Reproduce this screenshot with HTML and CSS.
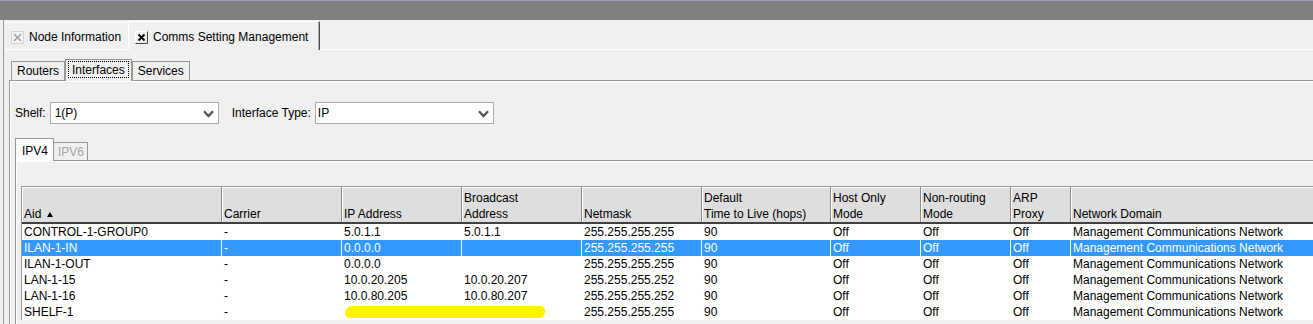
FILE: index.html
```html
<!DOCTYPE html>
<html lang="en">
<head>
<meta charset="utf-8">
<title>Comms Setting Management</title>
<link rel="stylesheet" href="styles.css">
</head>
<body>
<div class="titlebar"></div>
<div class="window">
  <div class="doc-tabs">
    <div class="doc-tab doc-tab--inactive">
      <svg class="close-icon" width="13" height="13" viewBox="0 0 13 13">
        <rect x="0.5" y="0.5" width="12" height="12" fill="#f4f4f4" stroke="#d4d4d4"/>
        <path d="M3 3 L10 10 M10 3 L3 10" stroke="#9a9a9a" stroke-width="1.4" fill="none"/>
      </svg>
      <span>Node Information</span>
    </div>
    <div class="doc-tab doc-tab--active">
      <svg class="close-icon" width="13" height="13" viewBox="0 0 13 13">
        <rect x="0" y="0" width="13" height="13" fill="#f0f0f0"/>
        <path d="M0.5 12.5 V0.5 H12.5" stroke="#ffffff" fill="none"/>
        <path d="M0.5 12.5 H12.5 V0.5" stroke="#404040" fill="none"/>
        <path d="M3.5 3.5 L9.5 9.5 M9.5 3.5 L3.5 9.5" stroke="#000" stroke-width="1.8" fill="none"/>
      </svg>
      <span>Comms Setting Management</span>
    </div>
    <div class="doc-tabs__fill"></div>
  </div>

  <div class="doc-panel">
    <div class="sub-tabs">
      <div class="sub-tab">Routers</div>
      <div class="sub-tab sub-tab--active"><span class="focus">Interfaces</span></div>
      <div class="sub-tab">Services</div>
    </div>

    <div class="sub-panel">
      <div class="filters">
        <span class="filter-label">Shelf:</span>
        <div class="combo combo--shelf">
          <span>1(P)</span>
          <svg class="chevron" width="11" height="8" viewBox="0 0 11 8"><path d="M1 1.2 L5.5 6 L10 1.2" stroke="#555" stroke-width="2.4" fill="none"/></svg>
        </div>
        <span class="filter-label filter-label--type">Interface Type:</span>
        <div class="combo combo--type">
          <span>IP</span>
          <svg class="chevron" width="11" height="8" viewBox="0 0 11 8"><path d="M1 1.2 L5.5 6 L10 1.2" stroke="#555" stroke-width="2.4" fill="none"/></svg>
        </div>
      </div>

      <div class="ip-tabs">
        <div class="ip-tab ip-tab--active">IPV4</div>
        <div class="ip-tab ip-tab--disabled">IPV6</div>
      </div>

      <div class="ip-panel">
        <div class="grid">
          <div class="grid-head">
            <div class="hcell hcell--sorted">Aid<svg class="sort-icon" width="6" height="5" viewBox="0 0 6 5"><path d="M0 5 L3 0 L6 5 Z" fill="#000"/></svg></div>
            <div class="hcell">Carrier</div>
            <div class="hcell">IP Address</div>
            <div class="hcell">Broadcast<br>Address</div>
            <div class="hcell">Netmask</div>
            <div class="hcell">Default<br>Time to Live (hops)</div>
            <div class="hcell">Host Only<br>Mode</div>
            <div class="hcell">Non-routing<br>Mode</div>
            <div class="hcell">ARP<br>Proxy</div>
            <div class="hcell">Network Domain</div>
          </div>

          <div class="grid-row">
            <div class="cell">CONTROL-1-GROUP0</div><div class="cell">-</div><div class="cell">5.0.1.1</div><div class="cell">5.0.1.1</div><div class="cell">255.255.255.255</div><div class="cell">90</div><div class="cell">Off</div><div class="cell">Off</div><div class="cell">Off</div><div class="cell">Management Communications Network</div>
          </div>
          <div class="grid-row grid-row--selected">
            <div class="cell">ILAN-1-IN</div><div class="cell">-</div><div class="cell">0.0.0.0</div><div class="cell"></div><div class="cell">255.255.255.255</div><div class="cell">90</div><div class="cell">Off</div><div class="cell">Off</div><div class="cell">Off</div><div class="cell">Management Communications Network</div>
          </div>
          <div class="grid-row">
            <div class="cell">ILAN-1-OUT</div><div class="cell">-</div><div class="cell">0.0.0.0</div><div class="cell"></div><div class="cell">255.255.255.255</div><div class="cell">90</div><div class="cell">Off</div><div class="cell">Off</div><div class="cell">Off</div><div class="cell">Management Communications Network</div>
          </div>
          <div class="grid-row">
            <div class="cell">LAN-1-15</div><div class="cell">-</div><div class="cell">10.0.20.205</div><div class="cell">10.0.20.207</div><div class="cell">255.255.255.252</div><div class="cell">90</div><div class="cell">Off</div><div class="cell">Off</div><div class="cell">Off</div><div class="cell">Management Communications Network</div>
          </div>
          <div class="grid-row">
            <div class="cell">LAN-1-16</div><div class="cell">-</div><div class="cell">10.0.80.205</div><div class="cell">10.0.80.207</div><div class="cell">255.255.255.252</div><div class="cell">90</div><div class="cell">Off</div><div class="cell">Off</div><div class="cell">Off</div><div class="cell">Management Communications Network</div>
          </div>
          <div class="grid-row">
            <div class="cell">SHELF-1</div><div class="cell">-</div><div class="cell cell--marked"><span class="highlight"></span></div><div class="cell"></div><div class="cell">255.255.255.255</div><div class="cell">90</div><div class="cell">Off</div><div class="cell">Off</div><div class="cell">Off</div><div class="cell">Management Communications Network</div>
          </div>
        </div>
      </div>
    </div>
  </div>
</div>
</body>
</html>
```

FILE: styles.css
```css
* { box-sizing: border-box; }

html, body {
  margin: 0;
  width: 1313px;
  height: 324px;
  overflow: hidden;
  background: #f0f0f0;
}

body {
  font-family: "Liberation Sans", Arial, sans-serif;
  font-size: 12px;
  color: #000;
}

.titlebar {
  height: 20px;
  border-top: 1px solid #9da5bd;
  background: #808080;
}

.window {
  margin-left: 3px;
  border-left: 1px solid #999;
  padding-left: 1px;
  height: 304px;
  overflow: hidden;
}

/* document tabs */
.doc-tabs {
  display: flex;
  align-items: flex-end;
  height: 30px;
}

.doc-tab {
  display: flex;
  align-items: center;
  gap: 5px;
  white-space: nowrap;
  padding-top: 2px;
}

.doc-tab--inactive {
  width: 123px;
  height: 28px;
  padding-left: 6px;
  border-top: 1px solid #fff;
  border-bottom: 1px solid #fff;
}

.doc-tab--active {
  width: 192px;
  height: 29px;
  padding-left: 6px;
  border-top: 1px solid #fff;
  border-left: 1px solid #fff;
  border-right: 1px solid #505050;
  box-shadow: inset -1px 0 0 #a8a8a8;
}

.close-icon { flex: none; }

.doc-tabs__fill {
  flex: 1;
  height: 1px;
  border-bottom: 1px solid #fff;
}

/* main panel */
.doc-panel {
  padding-top: 9px;
  margin-left: 4px;
}

.sub-tabs {
  display: flex;
  align-items: flex-end;
  height: 21px;
  padding-left: 2px;
}

.sub-tab {
  height: 19px;
  line-height: 19px;
  padding: 0 5px;
  border: 1px solid #999;
  border-bottom: none;
  white-space: nowrap;
}

.sub-tab--active {
  position: relative;
  z-index: 1;
  height: 22px;
  margin-bottom: -1px;
  padding: 1px 2px 0;
  background: #f0f0f0;
  line-height: 15px;
}

.focus {
  display: inline-block;
  border: 1px dotted #000;
  padding: 0 3px;
  height: 17px;
  line-height: 16px;
}

.sub-panel {
  border-top: 1px solid #999;
  border-left: 1px solid #999;
  box-shadow: inset 1px 1px 0 #fff;
  padding: 21px 0 0 5px;
  height: 300px;
}

.filters {
  display: flex;
  align-items: center;
  height: 22px;
}

.filter-label { margin-right: 4px; }
.filter-label--type { margin-left: 13px; }

.combo {
  display: flex;
  align-items: center;
  justify-content: space-between;
  height: 22px;
  padding: 0 4px 0 4px;
  border: 1px solid #acacac;
  background: #fff;
}

.combo--shelf { width: 169px; }
.combo--type { width: 179px; padding-left: 2px; }

.chevron { flex: none; margin-top: 1px; }

/* IPV tabs */
.ip-tabs {
  display: flex;
  align-items: flex-end;
  height: 22px;
  margin-top: 14px;
}

.ip-tab {
  border: 1px solid #999;
  border-bottom: none;
  white-space: nowrap;
}

.ip-tab--active {
  position: relative;
  z-index: 1;
  height: 23px;
  margin-bottom: -1px;
  padding: 1px 5px 0 6px;
  background: #fff;
  line-height: 22px;
}

.ip-tab--disabled {
  height: 18px;
  padding: 0 3px 0 4px;
  border-left: none;
  color: #a8a8a8;
  line-height: 19px;
}

.ip-panel {
  border-top: 1px solid #999;
  border-left: 1px solid #999;
  box-shadow: inset 1px 1px 0 #fff;
  padding: 25px 0 0 5px;
  height: 200px;
}

/* table */
.grid {
  --cols: 200px 120px 120px 120px 120px 129px 90px 90px 60px 300px;
  border-top: 1px solid #999;
  border-left: 1px solid #999;
  width: 1400px;
  background: #fff;
}

.grid-head {
  display: grid;
  grid-template-columns: var(--cols);
  background: #dedede;
  border-bottom: 2px solid #404040;
}

.hcell {
  height: 35px;
  padding: 3px 0 0 2px;
  display: flex;
  flex-direction: column;
  justify-content: flex-end;
  line-height: 16px;
  white-space: nowrap;
  border-right: 1px solid #8a8a8a;
  box-shadow: inset 1px 1px 0 #fff;
}

.hcell--sorted {
  flex-direction: row;
  justify-content: flex-start;
  align-items: flex-end;
}

.sort-icon {
  margin: 0 0 5px 6px;
}

.grid-row {
  display: grid;
  grid-template-columns: var(--cols);
  height: 16px;
  background: #fff;
}

.grid-row--selected {
  background: #3399ff;
  color: #fff;
}

.cell {
  padding: 1px 0 0 2px;
  line-height: 15px;
  border-right: 1px solid #fff;
  white-space: nowrap;
  overflow: hidden;
}

.cell--marked {
  position: relative;
  overflow: visible;
}

.highlight {
  position: absolute;
  left: 3px;
  top: 2px;
  width: 200px;
  height: 12px;
  border-radius: 7px 5px 6px 5px;
  background: #fff200;
  z-index: 2;
}
```
